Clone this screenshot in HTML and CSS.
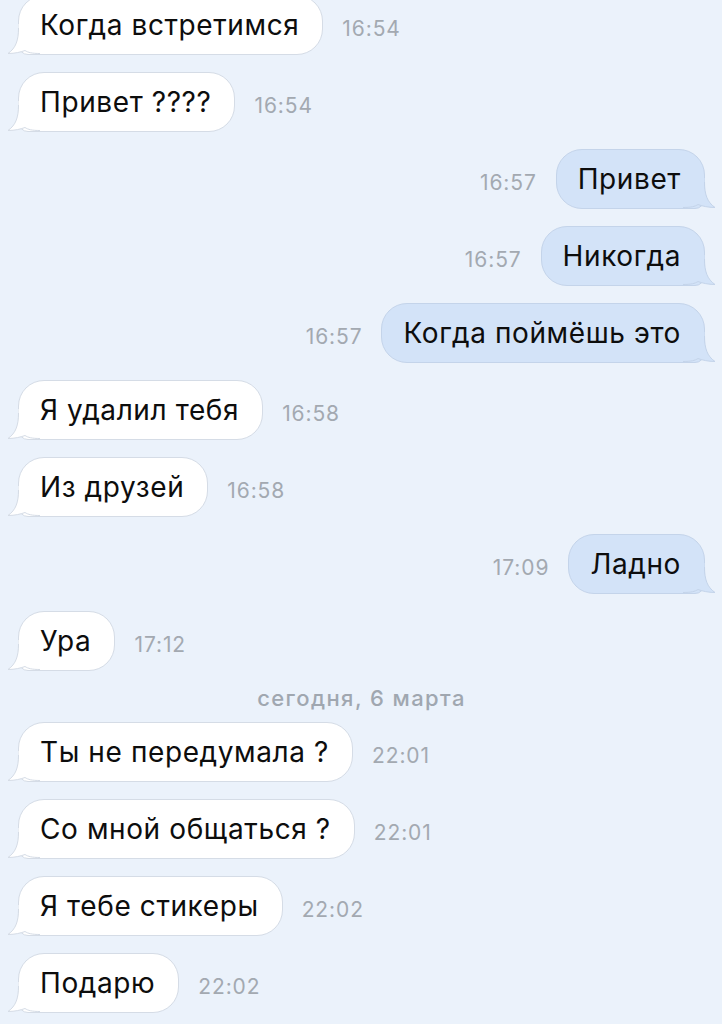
FILE: index.html
```html
<!DOCTYPE html>
<html lang="ru">
<head>
<meta charset="UTF-8">
<meta name="viewport" content="width=device-width, initial-scale=1.0">
<title>Диалог</title>
<link rel="stylesheet" href="styles.css">
</head>
<body>
<svg class="defs" width="0" height="0" aria-hidden="true">
  <!-- хвостик пузыря -->
  <symbol id="tail" viewBox="0 0 36 31">
    <path class="tail-fill" d="M12.5 0 L12.5 4 C12.5 16 10 24 2 29.5 C9 29.5 15 28 19 26.5 C22 28.5 26 29.5 34 29.5 L34 0 Z"/>
    <path class="tail-line" d="M12.5 4 C12.5 16 10 24 2 29.5 C9 29.5 15 28 19 26.5 C22 28.5 26 29.5 34 29.5"/>
  </symbol>
</svg>

<div class="chat">
  <div class="msg in">
    <div class="bubble"><svg class="tail"><use href="#tail"/></svg><span class="text">Когда встретимся</span></div>
    <span class="time">16:54</span>
  </div>
  <div class="msg in">
    <div class="bubble"><svg class="tail"><use href="#tail"/></svg><span class="text">Привет ????</span></div>
    <span class="time">16:54</span>
  </div>
  <div class="msg out">
    <span class="time">16:57</span>
    <div class="bubble"><svg class="tail"><use href="#tail"/></svg><span class="text">Привет</span></div>
  </div>
  <div class="msg out">
    <span class="time">16:57</span>
    <div class="bubble"><svg class="tail"><use href="#tail"/></svg><span class="text">Никогда</span></div>
  </div>
  <div class="msg out">
    <span class="time">16:57</span>
    <div class="bubble"><svg class="tail"><use href="#tail"/></svg><span class="text">Когда поймёшь это</span></div>
  </div>
  <div class="msg in">
    <div class="bubble"><svg class="tail"><use href="#tail"/></svg><span class="text">Я удалил тебя</span></div>
    <span class="time">16:58</span>
  </div>
  <div class="msg in">
    <div class="bubble"><svg class="tail"><use href="#tail"/></svg><span class="text">Из друзей</span></div>
    <span class="time">16:58</span>
  </div>
  <div class="msg out">
    <span class="time">17:09</span>
    <div class="bubble"><svg class="tail"><use href="#tail"/></svg><span class="text">Ладно</span></div>
  </div>
  <div class="msg in">
    <div class="bubble"><svg class="tail"><use href="#tail"/></svg><span class="text">Ура</span></div>
    <span class="time">17:12</span>
  </div>

  <div class="date">сегодня, 6 марта</div>

  <div class="msg in">
    <div class="bubble"><svg class="tail"><use href="#tail"/></svg><span class="text">Ты не передумала ?</span></div>
    <span class="time">22:01</span>
  </div>
  <div class="msg in">
    <div class="bubble"><svg class="tail"><use href="#tail"/></svg><span class="text">Со мной общаться ?</span></div>
    <span class="time">22:01</span>
  </div>
  <div class="msg in">
    <div class="bubble"><svg class="tail"><use href="#tail"/></svg><span class="text">Я тебе стикеры</span></div>
    <span class="time">22:02</span>
  </div>
  <div class="msg in">
    <div class="bubble"><svg class="tail"><use href="#tail"/></svg><span class="text">Подарю</span></div>
    <span class="time">22:02</span>
  </div>
</div>
</body>
</html>
```

FILE: styles.css
```css
body {
  margin: 0;
  padding: 0;
  background-color: #ebf2fb; /* фон чата */
  font-family: Inter, "Liberation Sans", Arial, sans-serif;
  color: #0d0d0d;
  overflow: hidden;
}
.defs {
  position: absolute;
}
.chat {
  display: flex;
  flex-direction: column;
  gap: 17px;
  margin-top: -5px;
  padding: 0 17px 0 18px;
}
.msg {
  display: flex;
  align-items: center;
  gap: 19px;
  height: 60px;
}
.msg.out {
  justify-content: flex-end;
}
.bubble {
  position: relative;
  box-sizing: border-box;
  height: 60px;
  padding: 0 23px 0 21px;
  display: flex;
  align-items: center;
  border-radius: 26px;
  font-size: 28px;
  letter-spacing: 0.6px;
}
.msg.in .bubble {
  background-color: #ffffff;
  border: 1px solid #d5dce6;
  border-bottom-left-radius: 10px;
  --tail-fill: #ffffff;
  --tail-line: #d5dce6;
}
.msg.out .bubble {
  background-color: #d3e3f8;
  border: 1px solid #c4d4ea;
  border-bottom-right-radius: 10px;
  --tail-fill: #d3e3f8;
  --tail-line: #c4d4ea;
}
.text {
  position: relative;
}
.tail {
  position: absolute;
  bottom: -1px;
  width: 36px;
  height: 31px;
  overflow: visible;
}
.msg.in .tail {
  left: -13px;
}
.msg.out .tail {
  right: -13px;
  transform: scaleX(-1);
}
.tail-fill {
  fill: var(--tail-fill);
  stroke: none;
}
.tail-line {
  fill: none;
  stroke: var(--tail-line);
  stroke-width: 1;
}
.time {
  padding-top: 6px;
  font-size: 21px;
  letter-spacing: 0.9px;
  color: #a3a9b1;
}
.date {
  height: 17px;
  line-height: 20px;
  text-align: center;
  font-size: 22px;
  font-weight: 500;
  color: #a0a7b0;
  letter-spacing: 1.4px;
}
```
